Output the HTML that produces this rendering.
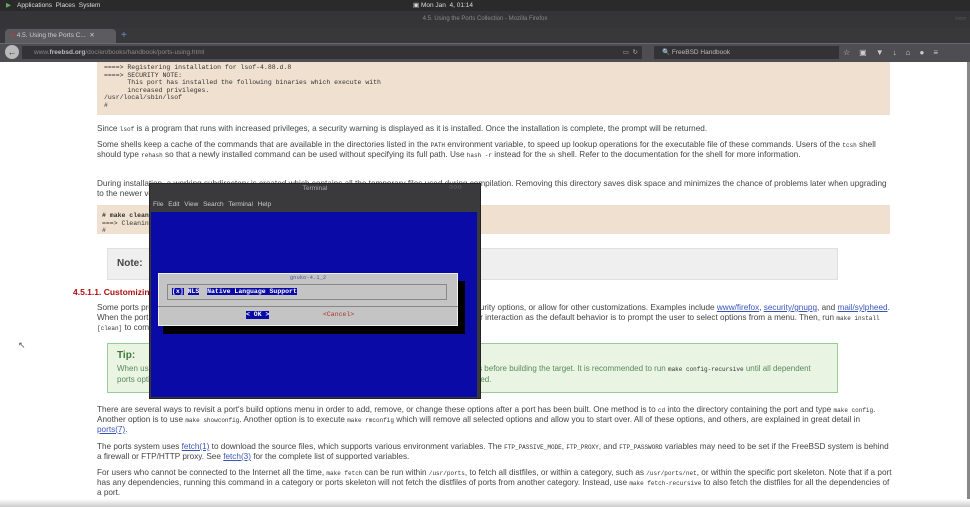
<!DOCTYPE html>
<html><head><meta charset="utf-8"><style>
*{margin:0;padding:0;box-sizing:border-box}
body{width:970px;height:507px;overflow:hidden;background:#fff;font-family:"Liberation Sans",sans-serif;position:relative;color:#333}
.a{position:absolute}
.p{position:absolute;font-size:8.2px;line-height:10px;color:#444;left:97px;width:795px}
.m{font-family:"Liberation Mono",monospace;font-size:6.5px;line-height:7.5px;color:#333}
.p .m{font-size:6px}
a{color:#3a55b8;text-decoration:underline}
</style></head><body>
<div class="a" style="left:0;top:0;width:970px;height:11px;background:#2a2a2a;color:#ddd;font-size:6.5px;line-height:11px">
<span style="margin-left:6px;color:#6a6">▶</span><span style="margin-left:6px">Applications &nbsp;Places &nbsp;System</span>
<span class="a" style="left:413px;top:0">▣ Mon Jan &nbsp;4, 01:14</span></div>
<div class="a" style="left:0;top:11px;width:970px;height:17px;background:#353537;color:#888;font-size:6px;line-height:17px;text-align:center">4.5. Using the Ports Collection - Mozilla Firefox<span class="a" style="right:4px;top:0;color:#777">○○○</span></div>
<div class="a" style="left:0;top:28px;width:970px;height:15px;background:#38383b"></div>
<div class="a" style="left:5px;top:29px;width:111px;height:14px;background:#5b5b60;border-radius:4px 4px 0 0;color:#ccc;font-size:6.5px;line-height:14px;padding-left:6px"><span style="color:#c33">●</span> 4.5. Using the Ports C... &nbsp;✕</div>
<div class="a" style="left:121px;top:30px;color:#6a8fd8;font-size:10px">+</div>
<div class="a" style="left:0;top:43px;width:970px;height:19px;background:#4d4d52;border-top:1px solid #6a6a6e"></div>
<div class="a" style="left:5px;top:45px;width:14px;height:14px;border-radius:7px;background:#bbb;color:#333;font-size:9px;line-height:14px;text-align:center">←</div>
<div class="a" style="left:22px;top:46px;width:620px;height:13px;background:#333336;color:#888;font-size:6.5px;line-height:13px;padding-left:12px">www.<b style="color:#bbb">freebsd.org</b>/doc/en/books/handbook/ports-using.html<span class="a" style="right:4px;color:#aaa">▭ &nbsp;↻</span></div>
<div class="a" style="left:654px;top:46px;width:185px;height:13px;background:#333336;color:#bbb;font-size:6.5px;line-height:13px;padding-left:8px">🔍 FreeBSD Handbook</div>
<div class="a" style="left:843px;top:46px;color:#ccc;font-size:8px;line-height:13px;letter-spacing:9px">☆▣▼↓⌂●≡</div>
<div class="a" style="left:967px;top:62px;width:3px;height:445px;background:#888"></div>

<div class="a" style="left:97px;top:62px;width:793px;height:53px;background:#efe0d0"></div>
<div class="a m" style="left:104px;top:64px">====&gt;  Registering installation for lsof-4.88.d.8<br>====&gt;  SECURITY NOTE:<br>&nbsp;&nbsp;&nbsp;&nbsp;&nbsp;&nbsp;This port has installed the following binaries which execute with<br>&nbsp;&nbsp;&nbsp;&nbsp;&nbsp;&nbsp;increased privileges.<br>/usr/local/sbin/lsof<br>#</div>

<div class="p" style="top:124px">Since <span class="m">lsof</span> is a program that runs with increased privileges, a security warning is displayed as it is installed. Once the installation is complete, the prompt will be returned.</div>
<div class="p" style="top:140px">Some shells keep a cache of the commands that are available in the directories listed in the <span class="m">PATH</span> environment variable, to speed up lookup operations for the executable file of these commands. Users of the <span class="m">tcsh</span> shell should type <span class="m">rehash</span> so that a newly installed command can be used without specifying its full path. Use <span class="m">hash -r</span> instead for the <span class="m">sh</span> shell. Refer to the documentation for the shell for more information.</div>
<div class="p" style="top:179px">During installation, a working subdirectory is created which contains all the temporary files used during compilation. Removing this directory saves disk space and minimizes the chance of problems later when upgrading to the newer version of the port.</div>
<div class="a" style="left:97px;top:205px;width:793px;height:29px;background:#efe0d0"></div>
<div class="a m" style="left:102px;top:212px"><b># make clean</b><br>===&gt;  Cleaning<br>#</div>
<div class="a" style="left:107px;top:248px;width:731px;height:32px;background:#efefef;border:1px solid #e0e0e0"></div>
<div class="a" style="left:117px;top:258px;font-size:10px;font-weight:bold;color:#444">Note:</div>
<div class="a" style="left:73px;top:287px;font-size:8.5px;font-weight:bold;color:#a11">4.5.1.1. Customizing Port Installation</div>
<div class="p" style="top:303px">Some ports provide build options which can be used to enable or disable application features, provide security options, or allow for other customizations. Examples include <a>www/firefox</a>, <a>security/gnupg</a>, and <a>mail/sylpheed</a>. When the port is built, a menu-driven options screen will appear; the port may pause several times for user interaction as the default behavior is to prompt the user to select options from a menu. Then, run <span class="m">make install [clean]</span> to compile and install the port.</div>
<div class="a" style="left:107px;top:343px;width:731px;height:50px;background:#e9f4e3;border:1px solid #9c9"></div>
<div class="a" style="left:117px;top:350px;font-size:10px;font-weight:bold;color:#3a7a3a">Tip:</div>
<div class="a" style="left:117px;top:363px;font-size:8px;line-height:11px;color:#5a8a5a;width:710px">When using make config-recursive, it is possible to configure all options for a port and its dependencies before building the target. It is recommended to run <span class="m" style="font-size:6px">make config-recursive</span> until all dependent ports options have been configured; run multiple times until all dependency options have been configured.</div>
<div class="p" style="top:405px">There are several ways to revisit a port's build options menu in order to add, remove, or change these options after a port has been built. One method is to <span class="m">cd</span> into the directory containing the port and type <span class="m">make config</span>. Another option is to use <span class="m">make showconfig</span>. Another option is to execute <span class="m">make rmconfig</span> which will remove all selected options and allow you to start over. All of these options, and others, are explained in great detail in <a>ports(7)</a>.</div>
<div class="p" style="top:442px">The ports system uses <a>fetch(1)</a> to download the source files, which supports various environment variables. The <span class="m">FTP_PASSIVE_MODE</span>, <span class="m">FTP_PROXY</span>, and <span class="m">FTP_PASSWORD</span> variables may need to be set if the FreeBSD system is behind a firewall or FTP/HTTP proxy. See <a>fetch(3)</a> for the complete list of supported variables.</div>
<div class="p" style="top:468px">For users who cannot be connected to the Internet all the time, <span class="m">make fetch</span> can be run within <span class="m">/usr/ports</span>, to fetch all distfiles, or within a category, such as <span class="m">/usr/ports/net</span>, or within the specific port skeleton. Note that if a port has any dependencies, running this command in a category or ports skeleton will not fetch the distfiles of ports from another category. Instead, use <span class="m">make fetch-recursive</span> to also fetch the distfiles for all the dependencies of a port.</div>
<div class="a" style="left:0;top:499px;width:970px;height:8px;background:linear-gradient(#fff,#ccc)"></div>
<div class="a" style="left:18px;top:340px;font-size:9px;color:#555">↖</div>

<div class="a" style="left:149px;top:183px;width:332px;height:216px;background:#3a3a3c;border:1px solid #222"></div>
<div class="a" style="left:149px;top:185px;width:332px;color:#aaa;font-size:6.5px;text-align:center">Terminal</div>
<div class="a" style="left:449px;top:184px;color:#888;font-size:7px">○○○</div>
<div class="a" style="left:153px;top:201px;color:#ccc;font-size:6.5px;word-spacing:3px">File Edit View Search Terminal Help</div>
<div class="a" style="left:151px;top:212px;width:326px;height:185px;background:#0a0aa6"></div>
<div class="a" style="left:163px;top:281px;width:302px;height:53px;background:#000"></div>
<div class="a" style="left:158px;top:273px;width:300px;height:53px;background:#c4c4c4;border:1px solid #eee"></div>
<div class="a m" style="left:158px;top:274px;width:300px;text-align:center;color:#559;font-size:5.5px">gnuko-4.1_2</div>
<div class="a" style="left:167px;top:284px;width:280px;height:16px;border:1px solid #888"></div>
<div class="a m" style="left:172px;top:288px;font-weight:bold"><span style="background:#0a0aa6;color:#fff">[x]</span> <span style="background:#0a0aa6;color:#fff">NLS</span> &nbsp;<span style="background:#0a0aa6;color:#fff">Native Language Support</span></div>
<div class="a" style="left:158px;top:306px;width:300px;height:1px;background:#888"></div>
<div class="a m" style="left:246px;top:311px;background:#0a0aa6;color:#fff;font-weight:bold">&lt;  OK  &gt;</div>
<div class="a m" style="left:323px;top:311px;color:#a33">&lt;Cancel&gt;</div>
</body></html>
